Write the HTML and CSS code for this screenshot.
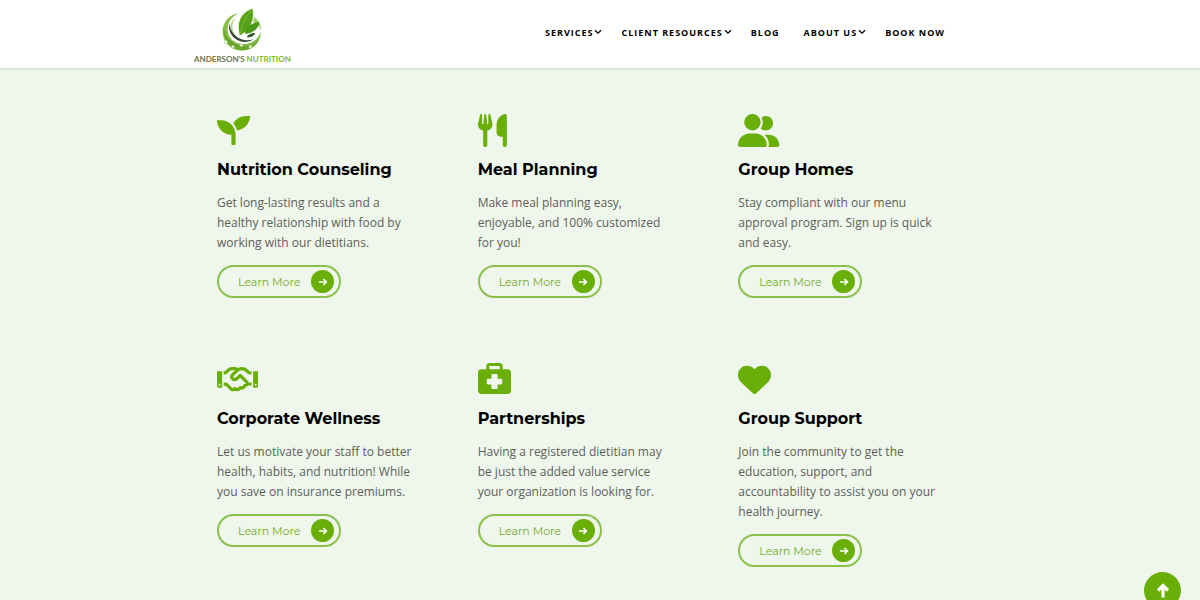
FILE: index.html
```html
<!DOCTYPE html>
<html lang="en">
<head>
    <meta charset="UTF-8">
    <meta name="viewport" content="width=device-width, initial-scale=1.0">
    <title>Anderson's Nutrition - Services</title>
    <link rel="stylesheet" href="styles.css">
</head>
<body>
    <!-- Shared icons -->
    <svg class="sprite" aria-hidden="true">
        <symbol id="chevron" viewBox="0 0 8 6">
            <path d="M1 1.2l3 3 3-3" fill="none" stroke="currentColor" stroke-width="1.3"/>
        </symbol>
        <symbol id="arrow" viewBox="0 0 10 10">
            <path d="M1 5h7.4M5.4 2l3 3-3 3" fill="none" stroke="currentColor" stroke-width="1.6"/>
        </symbol>
    </svg>

    <header class="site-header">
        <div class="header-inner">
            <a class="logo" href="#">
                <svg class="logo-mark" viewBox="116 24 120 132" aria-hidden="true">
                    <path fill="#86bf45" d="M166 40C136 44 117 68 118 97c1 32 26 55 57 55 32 0 57-24 58-57-10 24-29 38-54 37-26-1-45-18-46-43-1-21 12-39 33-49z"/>
                    <path fill="#6aa62e" d="M121 82c-5 38 22 68 54 68 24 0 43-12 52-32-14 15-31 22-51 19-30-4-50-26-55-55z"/>
                    <path fill="#a3cf6c" d="M212 50c14 9 22 24 21 42-4-12-12-20-24-25z"/>
                    <path fill="#b6d694" d="M158 54c-14 14-15 37 0 52-22-11-24-39 0-52z"/>
                    <path fill="#33452f" d="M138 70c-6 28 16 55 46 56 10 0 20-3 27-8-10 3-19 4-28 2-25-4-43-24-45-50z"/>
                    <path fill="#58a21a" stroke="#fff" stroke-width="2" d="M169 107C157 68 172 37 208 25c8 31-4 60-34 80z"/>
                    <path fill="none" stroke="#86bf45" stroke-width="2" d="M171 103C175 74 185 52 203 32"/>
                    <path fill="#4d9a1a" d="M184 101c3-19 18-32 44-36-2 21-19 36-44 36z"/>
                    <path fill="#2f5a28" d="M190 112c4-9 14-14 26-13-3 9-13 14-26 13z"/>
                    <g fill="#fff" stroke="#a3cf6c" stroke-width="2">
                        <circle cx="127" cy="126" r="5"/>
                        <circle cx="149" cy="140" r="4"/>
                        <circle cx="174" cy="136" r="4"/>
                        <circle cx="201" cy="140" r="4"/>
                    </g>
                </svg>
                <span class="logo-name">ANDERSON'S <span>NUTRITION</span></span>
            </a>
            <nav class="main-nav">
                <a href="#">Services <svg><use href="#chevron"/></svg></a>
                <a href="#">Client Resources <svg><use href="#chevron"/></svg></a>
                <a href="#">Blog</a>
                <a href="#">About Us <svg><use href="#chevron"/></svg></a>
                <a href="#">Book Now</a>
            </nav>
        </div>
    </header>

    <main class="services">
        <section class="service">
            <svg class="service-icon" viewBox="0 0 512 512" aria-hidden="true"><path d="M64 96H0c0 123.700 100.300 224 224 224v144c0 8.800 7.200 16 16 16h32c8.800 0 16-7.200 16-16V320C288 196.300 187.700 96 64 96zm384-64c-84.200 0-157.400 46.500-195.700 115.200 27.700 30.200 48.200 66.900 59 107.600C424 243.100 512 147.900 512 32h-64z"/></svg>
            <h2>Nutrition Counseling</h2>
            <p>Get long-lasting results and a healthy relationship with food by working with our dietitians.</p>
            <a class="learn-more" href="#">Learn More <span class="circle"><svg><use href="#arrow"/></svg></span></a>
        </section>

        <section class="service">
            <svg class="service-icon" viewBox="0 0 448 512" aria-hidden="true"><path d="M416 0C400 0 288 32 288 176V288c0 35.300 28.700 64 64 64h32V480c0 17.700 14.300 32 32 32s32-14.300 32-32V352 240 32c0-17.700-14.300-32-32-32zM64 16C64 7.800 57.900 1 49.700 .1S34.200 4.600 32.400 12.500L2.100 148.800C.7 155.100 0 161.500 0 167.900c0 45.900 35.100 83.600 80 87.700V480c0 17.700 14.300 32 32 32s32-14.300 32-32V255.600c44.900-4.100 80-41.800 80-87.700c0-6.400-.7-12.800-2.100-19.100L191.600 12.500c-1.800-8-9.300-13.300-17.400-12.400S160 7.800 160 16V150.200c0 5.400-4.400 9.800-9.800 9.800c-5.100 0-9.300-3.900-9.800-9L127.900 14.600C127.200 6.300 120.300 0 112 0s-15.200 6.300-15.900 14.600L83.700 151c-.5 5.100-4.700 9-9.800 9c-5.400 0-9.800-4.400-9.800-9.800V16z"/></svg>
            <h2>Meal Planning</h2>
            <p>Make meal planning easy, enjoyable, and 100% customized for you!</p>
            <a class="learn-more" href="#">Learn More <span class="circle"><svg><use href="#arrow"/></svg></span></a>
        </section>

        <section class="service">
            <svg class="service-icon" viewBox="0 0 640 512" aria-hidden="true"><path d="M96 128a128 128 0 1 1 256 0A128 128 0 1 1 96 128zM0 482.300C0 383.800 79.800 304 178.300 304h91.400C368.200 304 448 383.800 448 482.300c0 16.400-13.300 29.700-29.700 29.700H29.700C13.300 512 0 498.700 0 482.300zM609.300 512H471.400c5.400-9.400 8.600-20.300 8.600-32v-8c0-60.700-27.100-115.200-69.800-151.800c2.400-.1 4.700-.2 7.100-.2h61.400C567.800 320 640 392.200 640 481.300c0 17-13.800 30.700-30.700 30.700zM432 256c-31 0-59-12.600-79.300-32.900C372.400 196.500 384 163.600 384 128c0-26.800-6.600-52.100-18.300-74.300C384.300 40.100 407.200 32 432 32c61.900 0 112 50.100 112 112s-50.100 112-112 112z"/></svg>
            <h2>Group Homes</h2>
            <p>Stay compliant with our menu approval program. Sign up is quick and easy.</p>
            <a class="learn-more" href="#">Learn More <span class="circle"><svg><use href="#arrow"/></svg></span></a>
        </section>

        <section class="service">
            <svg class="service-icon" viewBox="0 0 640 512" aria-hidden="true"><path d="M0 128h80v256H32c-18 0-32-14-32-32zM560 128h80v224c0 18-14 32-32 32h-48z"/><path fill="none" stroke="#6aae08" stroke-width="50" stroke-linejoin="round" d="M104 152h28l52-48c16-12 34-17 54-17h34c14 0 26 4 38 12M104 328h26c10 0 19 5 26 12l62 62c22 20 48 14 58-8 20 26 64 28 88-12 30 14 62-4 68-36 26 2 38-8 42-20h62M536 152h-38l-56-48c-18-12-38-18-60-18-24 0-44 8-60 22l-78 72c-20 20-20 46-2 64 18 16 44 16 62 0l56-50 116 116"/><path fill="#eff6eb" d="M24 336a16 16 0 1 0 32 0 16 16 0 1 0-32 0zM584 336a16 16 0 1 0 32 0 16 16 0 1 0-32 0z"/></svg>
            <h2>Corporate Wellness</h2>
            <p>Let us motivate your staff to better health, habits, and nutrition! While you save on insurance premiums.</p>
            <a class="learn-more" href="#">Learn More <span class="circle"><svg><use href="#arrow"/></svg></span></a>
        </section>

        <section class="service">
            <svg class="service-icon" viewBox="0 32 512 512" aria-hidden="true"><path d="M464 128h-80V80c0-26.500-21.500-48-48-48H176c-26.500 0-48 21.500-48 48v48H48c-26.500 0-48 21.500-48 48v288c0 26.500 21.500 48 48 48h416c26.500 0 48-21.500 48-48V176c0-26.500-21.500-48-48-48zM176 80h160v48H176V80zm200 268c0 9-7 16-16 16h-56v56c0 9-7 16-16 16h-64c-9 0-16-7-16-16v-56h-56c-9 0-16-7-16-16v-56c0-9 7-16 16-16h56v-56c0-9 7-16 16-16h64c9 0 16 7 16 16v56h56c9 0 16 7 16 16v56z"/></svg>
            <h2>Partnerships</h2>
            <p>Having a registered dietitian may be just the added value service your organization is looking for.</p>
            <a class="learn-more" href="#">Learn More <span class="circle"><svg><use href="#arrow"/></svg></span></a>
        </section>

        <section class="service">
            <svg class="service-icon" viewBox="0 0 512 512" aria-hidden="true"><path d="M47.600 300.400L228.300 469.100c7.500 7 17.400 10.900 27.700 10.900s20.200-3.900 27.700-10.900L464.400 300.400c30.400-28.300 47.600-68 47.600-109.500v-5.800c0-69.900-50.500-129.500-119.400-141C347 36.500 300.600 51.400 268 84L256 96 244 84c-32.600-32.600-79-47.500-124.600-39.900C50.500 55.600 0 115.200 0 185.100v5.800c0 41.500 17.200 81.200 47.600 109.500z"/></svg>
            <h2>Group Support</h2>
            <p>Join the community to get the education, support, and accountability to assist you on your health journey.</p>
            <a class="learn-more" href="#">Learn More <span class="circle"><svg><use href="#arrow"/></svg></span></a>
        </section>
    </main>

    <a class="back-to-top" href="#" aria-label="Back to top">
        <svg viewBox="0 0 14 16"><path d="M7 14.500V3M2 7.500l5-5 5 5" fill="none" stroke="currentColor" stroke-width="3.200"/></svg>
    </a>
</body>
</html>
```

FILE: styles.css
```css
* {
    box-sizing: border-box;
}

body {
    margin: 0;
    font-family: 'Open Sans', sans-serif;
    background-color: #eff6eb;
    color: #5c5f5a;
}

a {
    text-decoration: none;
}

.sprite {
    display: none;
}

/* Header */
.site-header {
    background-color: #fff;
    border-bottom: 2px solid #dde7da;
}

.header-inner {
    display: flex;
    align-items: center;
    justify-content: space-between;
    max-width: 812px;
    height: 68px;
    margin: 0 auto;
    padding-right: 61px;
}

.logo {
    display: flex;
    flex-direction: column;
    align-items: center;
    gap: 2px;
    padding-top: 4px;
}

.logo-mark {
    width: 40px;
    height: 44px;
}

.logo-name {
    font-family: 'Lato', sans-serif;
    font-size: 8px;
    font-weight: 700;
    line-height: 10px;
    color: #66744f;
    white-space: nowrap;
}

.logo-name span {
    color: #7fba2c;
}

.main-nav {
    display: flex;
    gap: 24px;
    padding-bottom: 2px;
}

.main-nav a {
    display: flex;
    align-items: center;
    font-size: 9px;
    font-weight: 700;
    letter-spacing: 1px;
    line-height: 16px;
    text-transform: uppercase;
    color: #000;
}

.main-nav svg {
    width: 8px;
    height: 6px;
    margin: 0 -5px 2px 1px;
}

/* Services */
.services {
    display: grid;
    grid-template-columns: repeat(3, 1fr);
    row-gap: 65px;
    max-width: 782px;
    margin: 0 auto;
    padding: 44px 0 33px;
}

.service {
    padding: 0 56px 0 8px;
}

.service-icon {
    display: block;
    height: 33px;
    fill: #6aae08;
}

.service h2 {
    margin: 13px 0 13px;
    font-family: 'Montserrat', 'Inter', sans-serif;
    font-size: 16px;
    font-weight: 700;
    line-height: 20px;
    white-space: nowrap;
    color: #000;
}

.service p {
    margin: 0 0 12px;
    font-size: 12px;
    line-height: 20px;
}

.learn-more {
    display: flex;
    align-items: center;
    justify-content: space-between;
    width: 124px;
    height: 33px;
    padding: 0 5px 0 19px;
    border: 2px solid #8cc04d;
    border-radius: 17px;
    font-family: 'Montserrat', 'Inter', sans-serif;
    font-size: 11px;
    color: #72ab2b;
}

.circle {
    display: flex;
    align-items: center;
    justify-content: center;
    width: 23px;
    height: 23px;
    border-radius: 50%;
    background-color: #6aae08;
    color: #fff;
}

.circle svg {
    width: 10px;
    height: 10px;
}

.back-to-top {
    position: fixed;
    right: 19px;
    bottom: -9px;
    display: flex;
    align-items: center;
    justify-content: center;
    width: 37px;
    height: 37px;
    border-radius: 50%;
    background-color: #6aae08;
    color: #fff;
}

.back-to-top svg {
    width: 14px;
    height: 16px;
}
```
